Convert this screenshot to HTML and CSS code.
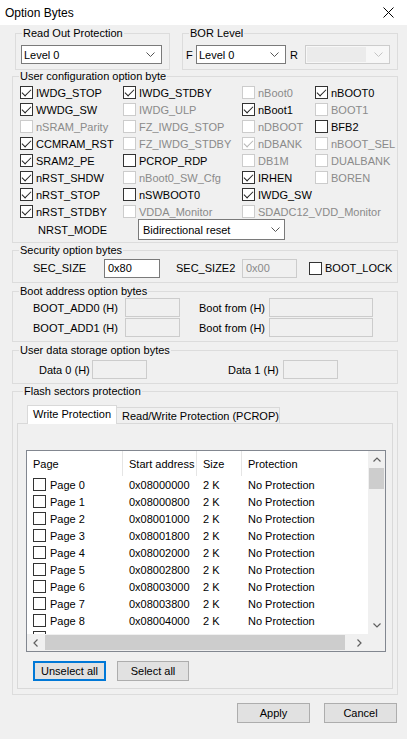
FILE: index.html
```html
<!DOCTYPE html>
<html lang="en">
<head>
    <meta charset="UTF-8">
    <meta name="viewport" content="width=device-width, initial-scale=1.0">
    <title>Option Bytes</title>
    <link rel="stylesheet" href="styles.css">
</head>
<body>
    <div class="title-bar">
        <span class="title">Option Bytes</span>
        <svg class="close-icon" width="11" height="11" viewBox="0 0 11 11">
            <path d="M0.5 0.5L10.5 10.5M10.5 0.5L0.5 10.5" stroke="#000" stroke-width="1" fill="none"/>
        </svg>
    </div>

    <div class="dialog">
        <div class="top-row">
            <fieldset class="group read-out">
                <legend>Read Out Protection</legend>
                <div class="select rdp-select">
                    <span>Level 0</span>
                    <svg width="9" height="5" viewBox="0 0 9 5"><polyline points="0.5,0.5 4.5,4.5 8.5,0.5" fill="none" stroke="#555"/></svg>
                </div>
            </fieldset>
            <fieldset class="group bor">
                <legend>BOR Level</legend>
                <div class="bor-row">
                    <span class="bor-f">F</span>
                    <div class="select bor-select">
                        <span>Level 0</span>
                        <svg width="9" height="5" viewBox="0 0 9 5"><polyline points="0.5,0.5 4.5,4.5 8.5,0.5" fill="none" stroke="#555"/></svg>
                    </div>
                    <span class="bor-r">R</span>
                    <div class="select is-disabled bor-r-select">
                        <span class="value"></span>
                        <svg width="9" height="5" viewBox="0 0 9 5"><polyline points="0.5,0.5 4.5,4.5 8.5,0.5" fill="none" stroke="#c4c4c4"/></svg>
                    </div>
                </div>
            </fieldset>
        </div>

        <fieldset class="group user-config">
            <legend>User configuration option byte</legend>
            <div class="option-grid">
                <label class="check is-checked"><span class="box"></span>IWDG_STOP</label>
                <label class="check is-checked"><span class="box"></span>IWDG_STDBY</label>
                <label class="check is-disabled"><span class="box"></span>nBoot0</label>
                <label class="check is-checked"><span class="box"></span>nBOOT0</label>

                <label class="check is-checked"><span class="box"></span>WWDG_SW</label>
                <label class="check is-disabled"><span class="box"></span>IWDG_ULP</label>
                <label class="check is-checked"><span class="box"></span>nBoot1</label>
                <label class="check is-disabled"><span class="box"></span>BOOT1</label>

                <label class="check is-disabled"><span class="box"></span>nSRAM_Parity</label>
                <label class="check is-disabled"><span class="box"></span>FZ_IWDG_STOP</label>
                <label class="check is-disabled"><span class="box"></span>nDBOOT</label>
                <label class="check"><span class="box"></span>BFB2</label>

                <label class="check is-checked"><span class="box"></span>CCMRAM_RST</label>
                <label class="check is-disabled"><span class="box"></span>FZ_IWDG_STDBY</label>
                <label class="check is-disabled is-checked"><span class="box"></span>nDBANK</label>
                <label class="check is-disabled"><span class="box"></span>nBOOT_SEL</label>

                <label class="check is-checked"><span class="box"></span>SRAM2_PE</label>
                <label class="check"><span class="box"></span>PCROP_RDP</label>
                <label class="check is-disabled"><span class="box"></span>DB1M</label>
                <label class="check is-disabled"><span class="box"></span>DUALBANK</label>

                <label class="check is-checked"><span class="box"></span>nRST_SHDW</label>
                <label class="check is-disabled"><span class="box"></span>nBoot0_SW_Cfg</label>
                <label class="check is-checked"><span class="box"></span>IRHEN</label>
                <label class="check is-disabled"><span class="box"></span>BOREN</label>

                <label class="check is-checked"><span class="box"></span>nRST_STOP</label>
                <label class="check"><span class="box"></span>nSWBOOT0</label>
                <label class="check is-checked"><span class="box"></span>IWDG_SW</label>
                <span></span>

                <label class="check is-checked"><span class="box"></span>nRST_STDBY</label>
                <label class="check is-disabled"><span class="box"></span>VDDA_Monitor</label>
                <label class="check is-disabled span-2"><span class="box"></span>SDADC12_VDD_Monitor</label>
            </div>
            <div class="nrst-row">
                <span class="nrst-label">NRST_MODE</span>
                <div class="select nrst-select">
                    <span>Bidirectional reset</span>
                    <svg width="9" height="5" viewBox="0 0 9 5"><polyline points="0.5,0.5 4.5,4.5 8.5,0.5" fill="none" stroke="#555"/></svg>
                </div>
            </div>
        </fieldset>

        <fieldset class="group security">
            <legend>Security option bytes</legend>
            <div class="sec-row">
                <span class="sec-label">SEC_SIZE</span>
                <div class="field sec-field">0x80</div>
                <span class="sec-label2">SEC_SIZE2</span>
                <div class="field is-disabled sec-field2">0x00</div>
                <label class="check boot-lock"><span class="box"></span>BOOT_LOCK</label>
            </div>
        </fieldset>

        <fieldset class="group boot-address">
            <legend>Boot address option bytes</legend>
            <div class="field-row">
                <span class="boot-label">BOOT_ADD0 (H)</span>
                <div class="field is-disabled boot-field"></div>
                <span class="from-label">Boot from (H)</span>
                <div class="field is-disabled from-field"></div>
            </div>
            <div class="field-row">
                <span class="boot-label">BOOT_ADD1 (H)</span>
                <div class="field is-disabled boot-field"></div>
                <span class="from-label">Boot from (H)</span>
                <div class="field is-disabled from-field"></div>
            </div>
        </fieldset>

        <fieldset class="group user-data">
            <legend>User data storage option bytes</legend>
            <div class="field-row data-row">
                <span class="data-label">Data 0 (H)</span>
                <div class="field is-disabled data-field"></div>
                <span class="data-label2">Data 1 (H)</span>
                <div class="field is-disabled data-field"></div>
            </div>
        </fieldset>

        <fieldset class="group flash">
            <legend>Flash sectors protection</legend>
            <div class="tabs">
                <div class="tab is-active">Write Protection</div>
                <div class="tab">Read/Write Protection (PCROP)</div>
            </div>
            <div class="tab-panel">
                <div class="list">
                    <div class="list-view">
                        <div class="list-header">
                            <span>Page</span>
                            <span>Start address</span>
                            <span>Size</span>
                            <span>Protection</span>
                        </div>
                        <div class="list-row"><span class="page-cell"><span class="box"></span>Page 0</span><span>0x08000000</span><span>2 K</span><span>No Protection</span></div>
                        <div class="list-row"><span class="page-cell"><span class="box"></span>Page 1</span><span>0x08000800</span><span>2 K</span><span>No Protection</span></div>
                        <div class="list-row"><span class="page-cell"><span class="box"></span>Page 2</span><span>0x08001000</span><span>2 K</span><span>No Protection</span></div>
                        <div class="list-row"><span class="page-cell"><span class="box"></span>Page 3</span><span>0x08001800</span><span>2 K</span><span>No Protection</span></div>
                        <div class="list-row"><span class="page-cell"><span class="box"></span>Page 4</span><span>0x08002000</span><span>2 K</span><span>No Protection</span></div>
                        <div class="list-row"><span class="page-cell"><span class="box"></span>Page 5</span><span>0x08002800</span><span>2 K</span><span>No Protection</span></div>
                        <div class="list-row"><span class="page-cell"><span class="box"></span>Page 6</span><span>0x08003000</span><span>2 K</span><span>No Protection</span></div>
                        <div class="list-row"><span class="page-cell"><span class="box"></span>Page 7</span><span>0x08003800</span><span>2 K</span><span>No Protection</span></div>
                        <div class="list-row"><span class="page-cell"><span class="box"></span>Page 8</span><span>0x08004000</span><span>2 K</span><span>No Protection</span></div>
                        <div class="list-row"><span class="page-cell"><span class="box"></span>Page 9</span><span>0x08004800</span><span>2 K</span><span>No Protection</span></div>
                        <div class="list-row"><span class="page-cell"><span class="box"></span>Page 10</span><span>0x08005000</span><span>2 K</span><span>No Protection</span></div>
                    </div>
                    <div class="vscroll">
                        <span class="arrow"><svg width="8" height="5" viewBox="0 0 8 5"><polyline points="0.5,4.5 4,1 7.5,4.5" fill="none" stroke="#606060" stroke-width="1.2"/></svg></span>
                        <span class="vtrack"><span class="vthumb"></span></span>
                        <span class="arrow"><svg width="8" height="5" viewBox="0 0 8 5"><polyline points="0.5,0.5 4,4 7.5,0.5" fill="none" stroke="#606060" stroke-width="1.2"/></svg></span>
                    </div>
                    <div class="hscroll">
                        <span class="arrow"><svg width="5" height="8" viewBox="0 0 5 8"><polyline points="4.5,0.5 1,4 4.5,7.5" fill="none" stroke="#606060" stroke-width="1.2"/></svg></span>
                        <span class="htrack"><span class="hthumb"></span></span>
                        <span class="arrow"><svg width="5" height="8" viewBox="0 0 5 8"><polyline points="0.5,0.5 4,4 0.5,7.5" fill="none" stroke="#606060" stroke-width="1.2"/></svg></span>
                    </div>
                    <div class="corner"></div>
                </div>
                <div class="panel-buttons">
                    <button class="btn is-focused unselect-btn">Unselect all</button>
                    <button class="btn select-btn">Select all</button>
                </div>
            </div>
        </fieldset>

        <div class="dialog-buttons">
            <button class="btn">Apply</button>
            <button class="btn">Cancel</button>
        </div>
    </div>
</body>
</html>
```

FILE: styles.css
```css
* {
    box-sizing: border-box;
}

body {
    margin: 0;
    width: 407px;
    height: 739px;
    overflow: hidden;
    font-family: "Liberation Sans", Arial, sans-serif;
    font-size: 11px;
    color: #000;
    background-color: #f0f0f0;
}

.title-bar {
    height: 25px;
    background-color: #ffffff;
    display: flex;
    align-items: center;
    justify-content: space-between;
    padding: 0 13px 0 5px;
    font-size: 12px;
}

.close-icon {
    display: block;
}

.dialog {
    padding: 2px 9px 0 12px;
}

/* group boxes */
.group {
    border: 1px solid #dcdcdc;
    margin: 0;
    padding: 0;
    min-width: 0;
}

.group legend {
    margin-left: 6px;
    padding: 0 1px;
    line-height: 13px;
}

.top-row {
    display: flex;
    gap: 12px;
    margin-left: 3px;
}

.read-out {
    width: 155px;
}

.bor {
    flex: 1;
}

/* combo boxes */
.select {
    display: flex;
    align-items: center;
    justify-content: space-between;
    height: 19px;
    border: 1px solid #7a7a7a;
    background-color: #ffffff;
    padding: 0 6px 0 2px;
}

.select svg {
    display: block;
    flex: none;
}

.select.is-disabled {
    border-color: #cccccc;
    background-color: #f7f7f7;
    padding: 0 6px 0 1px;
}

.select.is-disabled .value {
    flex: 1;
    height: 15px;
    margin-right: 8px;
    background-color: #ebebeb;
}

.rdp-select {
    width: 141px;
    margin: 5px 0 5px 5px;
}

.bor-row {
    display: flex;
    align-items: center;
    margin: 5px 0 5px 3px;
}

.bor-f {
    width: 10px;
}

.bor-select {
    width: 90px;
}

.bor-r {
    margin-left: 4px;
    width: 15px;
}

.bor-r-select {
    width: 85px;
}

/* check boxes */
.check {
    display: flex;
    align-items: center;
    height: 17px;
    white-space: nowrap;
}

.box {
    position: relative;
    flex: none;
    width: 13px;
    height: 13px;
    margin-right: 3px;
    border: 1px solid #333333;
    background-color: #ffffff;
}

.is-checked .box::after {
    content: "";
    position: absolute;
    left: 3px;
    top: 0px;
    width: 4px;
    height: 8px;
    border: solid #222222;
    border-width: 0 1px 1px 0;
    transform: rotate(45deg);
}

.check.is-disabled {
    color: #8a8a8a;
}

.check.is-disabled .box {
    border-color: #cccccc;
}

.check.is-disabled.is-checked .box::after {
    border-color: #b5b5b5;
}

.option-grid {
    display: grid;
    grid-template-columns: 103px 119px 73px auto;
    grid-auto-rows: 17px;
    padding: 1px 0 0 7px;
}

.span-2 {
    grid-column: span 2;
}

.nrst-row {
    display: flex;
    align-items: center;
    height: 21px;
    margin: -1px 0 2px;
    padding-left: 25px;
}

.nrst-label {
    width: 100px;
}

.nrst-select {
    width: 147px;
    height: 21px;
    padding: 0 4px 0 4px;
}

/* text fields */
.field {
    display: flex;
    align-items: center;
    height: 19px;
    border: 1px solid #7a7a7a;
    background-color: #ffffff;
    padding-left: 3px;
}

.field.is-disabled {
    border-color: #cccccc;
    background-color: #f0f0f0;
    color: #8a8a8a;
}

.security {
    margin-top: 1px;
}

.sec-row {
    display: flex;
    align-items: center;
    height: 20px;
    margin: 1px 0 4px;
    padding-left: 20px;
}

.sec-label {
    width: 71px;
}

.sec-field {
    width: 56px;
}

.sec-label2 {
    margin-left: 16px;
    width: 66px;
}

.sec-field2 {
    width: 55px;
}

.boot-lock {
    margin-left: 12px;
}

.boot-address {
    margin-top: 2px;
    padding-bottom: 4px;
}

.field-row {
    display: flex;
    align-items: center;
    height: 19px;
    padding-left: 20px;
}

.field-row + .field-row {
    margin-top: 1px;
}

.boot-label {
    width: 92px;
}

.boot-field {
    width: 55px;
}

.from-label {
    margin-left: 19px;
    width: 70px;
}

.from-field {
    width: 104px;
}

.user-data {
    margin-top: 2px;
    padding: 3px 0 4px;
}

.data-row {
    padding-left: 26px;
}

.data-label {
    width: 53px;
}

.data-field {
    width: 55px;
}

.data-label2 {
    margin-left: 81px;
    width: 55px;
}

/* flash sectors */
.flash {
    margin-top: 1px;
    padding: 7px 4px 5px 4px;
}

.tabs {
    display: flex;
    align-items: flex-end;
    height: 18px;
    padding-left: 10px;
}

.tab {
    height: 16px;
    padding: 0 5px;
    display: flex;
    align-items: center;
    border: 1px solid #d9d9d9;
    border-bottom: none;
    background-color: #f0f0f0;
    white-space: nowrap;
}

.tab.is-active {
    position: relative;
    z-index: 1;
    height: 19px;
    margin-bottom: -1px;
    padding-bottom: 2px;
    width: 90px;
    background-color: #ffffff;
}

.tab + .tab {
    border-left: none;
    width: 163px;
}

.tab-panel {
    height: 266px;
    border: 1px solid #d9d9d9;
    padding: 26px 0 0 8px;
}

.list {
    width: 360px;
    height: 202px;
    border: 1px solid #828790;
    background-color: #ffffff;
    display: grid;
    grid-template-columns: 1fr 17px;
    grid-template-rows: 1fr 17px;
}

.list-view {
    overflow: hidden;
}

.list-header,
.list-row {
    display: grid;
    grid-template-columns: 96px 74px 45px 1fr;
}

.list-header {
    height: 25px;
}

.list-header span {
    display: flex;
    align-items: center;
    padding-left: 6px;
    border-right: 1px solid #e5e5e5;
}

.list-header span:last-child {
    border-right: none;
}

.list-row {
    height: 17px;
    align-items: center;
}

.list-row span {
    padding-left: 6px;
    white-space: nowrap;
}

.list-row .page-cell {
    display: flex;
    align-items: center;
}

.list-row .box {
    margin-right: 4px;
}

.vscroll {
    display: flex;
    flex-direction: column;
    background-color: #f0f0f0;
}

.hscroll {
    display: flex;
    background-color: #f0f0f0;
}

.arrow {
    flex: none;
    width: 17px;
    height: 17px;
    display: flex;
    align-items: center;
    justify-content: center;
}

.vtrack {
    flex: 1;
    padding: 0 1px;
}

.vthumb {
    display: block;
    height: 21px;
    background-color: #cdcdcd;
}

.htrack {
    flex: 1;
    padding: 1px 0;
}

.hthumb {
    display: block;
    width: 300px;
    height: 100%;
    margin-left: 1px;
    background-color: #cdcdcd;
}

.corner {
    background-color: #f0f0f0;
}

/* buttons */
.btn {
    height: 20px;
    width: 73px;
    padding: 0;
    border: 1px solid #adadad;
    background-color: #e1e1e1;
    font-family: inherit;
    font-size: 11px;
    color: #000;
}

.btn.is-focused {
    border-color: #0078d7;
    box-shadow: inset 0 0 0 1px #0078d7;
}

.panel-buttons {
    display: flex;
    gap: 11px;
    margin-top: 9px;
    padding-left: 7px;
}

.select-btn {
    width: 72px;
}

.dialog-buttons {
    display: flex;
    justify-content: flex-end;
    gap: 14px;
    margin-top: 8px;
    padding-right: 1px;
}
```
